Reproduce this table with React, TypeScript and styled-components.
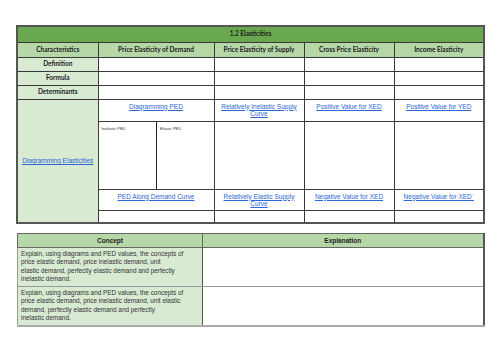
import styled, { createGlobalStyle } from "styled-components";

const GlobalStyle = createGlobalStyle`
  html, body {
    margin: 0;
    padding: 0;
    background: #ffffff;
  }
`;

const Page = styled.div`
  width: 500px;
  height: 353px;
  padding: 25px 17px 0 16px;
  box-sizing: border-box;
  display: flex;
  flex-direction: column;
  gap: 9px;
`;

const Grid = styled.table`
  border-collapse: collapse;
  table-layout: fixed;
  width: 467px;
  border: 2px solid #555;
`;

const Row = styled.tr<{ h: number }>`
  height: ${(p) => p.h}px;
`;

const TitleCell = styled.td`
  padding: 0;
  background: #6aa84f;
  border: 1px solid #3a3a3a;
  font-family: Lato, "Liberation Sans", sans-serif;
  font-weight: 700;
  font-size: 6.5px;
  line-height: 8px;
  color: #1b1b1b;
  text-align: center;
`;

const HeadCell = styled.th`
  padding: 0 2px;
  background: #b6d7a8;
  border: 1px solid #3a3a3a;
  font-family: Lato, "Liberation Sans", sans-serif;
  font-weight: 700;
  font-size: 6.5px;
  line-height: 8px;
  color: #1b1b1b;
  text-align: center;
`;

const LabelCell = styled.td`
  padding: 0 2px;
  background: #d9ead3;
  border: 1px solid #3a3a3a;
  font-family: Lato, "Liberation Sans", sans-serif;
  font-weight: 700;
  font-size: 6.5px;
  line-height: 8px;
  color: #1b1b1b;
  text-align: center;
  vertical-align: middle;
`;

const Cell = styled.td`
  padding: 3px 3px 0;
  border: 1px solid #3a3a3a;
  background: #fff;
  text-align: center;
  vertical-align: top;
  font-family: "Liberation Sans", Arial, sans-serif;
  font-size: 6.5px;
  line-height: 7.5px;
`;

const LinkLabel = styled.td`
  padding: 0 3px;
  background: #d9ead3;
  border: 1px solid #3a3a3a;
  text-align: center;
  vertical-align: middle;
  font-family: "Liberation Sans", Arial, sans-serif;
  font-size: 6.5px;
  white-space: nowrap;
`;

const Link = styled.a`
  color: #2a66d4;
  text-decoration: underline;
`;

const SplitCell = styled.td`
  padding: 0;
  border: 1px solid #3a3a3a;
  vertical-align: top;
`;

const Split = styled.div`
  display: grid;
  grid-template-columns: 1fr 1fr;
  height: 67px;
`;

const Half = styled.div<{ divider?: boolean }>`
  padding: 4px 3px;
  border-left: ${(p) => (p.divider ? "1px solid #222" : "none")};
  font-family: "Liberation Sans", Arial, sans-serif;
  font-size: 4px;
  color: #333;
`;

const Notes = styled.table`
  border-collapse: collapse;
  table-layout: fixed;
  width: 466px;
  margin-left: 1px;
  border: 1px solid #666;
  border-right: 2px solid #555;
  border-bottom: 2px solid #aaa;
`;

const NoteHead = styled.th`
  padding: 0;
  background: #b6d7a8;
  border: 1px solid #666;
  font-family: "Liberation Sans", Arial, sans-serif;
  font-size: 6.5px;
  font-weight: 700;
  color: #222;
  text-align: center;
`;

const NoteText = styled.td`
  padding: 2px 3px 0;
  background: #d9ead3;
  border: 1px solid #999;
  border-right: 1px solid #555;
  font-family: "Liberation Sans", Arial, sans-serif;
  font-size: 6.4px;
  line-height: 8.4px;
  color: #333;
  vertical-align: top;
`;

const NoteBlank = styled.td`
  border: 1px solid #999;
  background: #fff;
`;

const rows = ["Definition", "Formula", "Determinants"];
const heads = [
  "Characteristics",
  "Price Elasticity of Demand",
  "Price Elasticity of Supply",
  "Cross Price Elasticity",
  "Income Elasticity",
];

function App() {
  return (
    <>
      <GlobalStyle />
      <Page>
        <Grid>
          <colgroup>
            <col style={{ width: 81 }} />
            <col style={{ width: 116 }} />
            <col style={{ width: 90 }} />
            <col style={{ width: 90 }} />
            <col style={{ width: 90 }} />
          </colgroup>
          <tbody>
            <Row h={16}>
              <TitleCell colSpan={5}>1.2 Elasticities</TitleCell>
            </Row>
            <Row h={15}>
              {heads.map((h) => (
                <HeadCell key={h}>{h}</HeadCell>
              ))}
            </Row>
            {rows.map((r) => (
              <Row h={14} key={r}>
                <LabelCell>{r}</LabelCell>
                <Cell />
                <Cell />
                <Cell />
                <Cell />
              </Row>
            ))}
            <Row h={22}>
              <LinkLabel rowSpan={4}>
                <Link>Diagramming Elasticities</Link>
              </LinkLabel>
              <Cell>
                <Link>Diagramming PED</Link>
              </Cell>
              <Cell>
                <Link>Relatively Inelastic Supply Curve</Link>
              </Cell>
              <Cell>
                <Link>Positive Value for XED</Link>
              </Cell>
              <Cell>
                <Link>Positive Value for YED</Link>
              </Cell>
            </Row>
            <Row h={68}>
              <SplitCell>
                <Split>
                  <Half>Inelastic PED</Half>
                  <Half divider>Elastic PED</Half>
                </Split>
              </SplitCell>
              <Cell />
              <Cell />
              <Cell />
            </Row>
            <Row h={21}>
              <Cell>
                <Link>PED Along Demand Curve</Link>
              </Cell>
              <Cell>
                <Link>Relatively Elastic Supply Curve</Link>
              </Cell>
              <Cell>
                <Link>Negative Value for XED</Link>
              </Cell>
              <Cell>
                <Link>Negative Value for XED`</Link>
              </Cell>
            </Row>
            <Row h={13}>
              <Cell />
              <Cell />
              <Cell />
              <Cell />
            </Row>
          </tbody>
        </Grid>
        <Notes>
          <colgroup>
            <col style={{ width: 185 }} />
            <col style={{ width: 281 }} />
          </colgroup>
          <tbody>
            <Row h={14}>
              <NoteHead>Concept</NoteHead>
              <NoteHead>Explanation</NoteHead>
            </Row>
            <Row h={39}>
              <NoteText>
                Explain, using diagrams and PED values, the concepts of
                <br />
                price elastic demand, price inelastic demand, unit
                <br />
                elastic demand, perfectly elastic demand and perfectly
                <br />
                inelastic demand.
              </NoteText>
              <NoteBlank />
            </Row>
            <Row h={39}>
              <NoteText>
                Explain, using diagrams and PED values, the concepts of
                <br />
                price elastic demand, price inelastic demand, unit elastic
                <br />
                demand, perfectly elastic demand and perfectly
                <br />
                inelastic demand.
              </NoteText>
              <NoteBlank />
            </Row>
          </tbody>
        </Notes>
      </Page>
    </>
  );
}

export default App;
